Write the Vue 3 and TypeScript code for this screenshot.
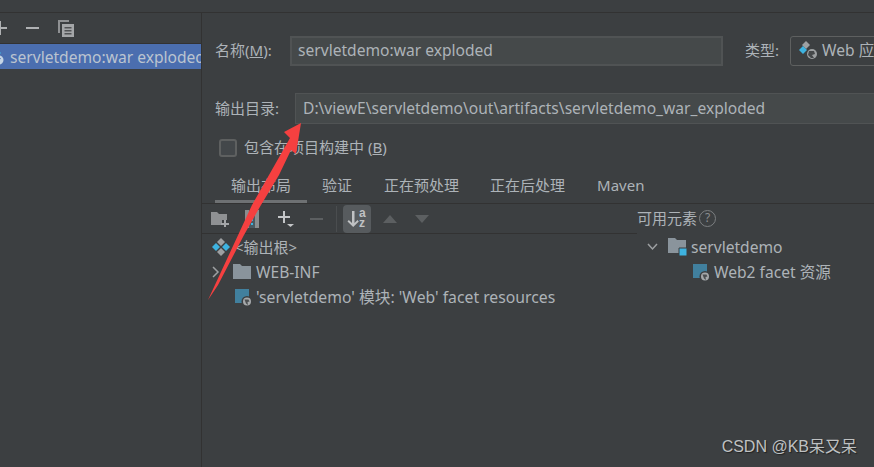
<script setup lang="ts">
const tabs: string[] = ['输出布局', '验证', '正在预处理', '正在后处理', 'Maven']
</script>

<template>
  <div class="root">
    <div class="topstrip"></div>
    <div class="main">
      <aside class="side">
        <div class="side-tools">
          <svg width="14" height="14" viewBox="0 0 14 14" class="plus"><path d="M0 6h14v2H0zM6 0h2v14H6z" fill="#afb1b3"/></svg>
          <svg width="14" height="4" viewBox="0 0 14 4" class="minus"><rect y="1" width="13" height="2" fill="#afb1b3"/></svg>
          <svg width="16" height="17" viewBox="0 0 16 17" class="copy"><path d="M0 0h11v2H2v11H0z" fill="#8f9193"/><path d="M4 4h12v13H4z" fill="#a4a6a8"/><path d="M6.500 7h7v1.500h-7zM6.500 10h7v1.500h-7zM6.500 13h7v1.500h-7z" fill="#505254"/></svg>
        </div>
        <div class="artifact">
          <svg width="16" height="16" viewBox="0 0 16 16" class="art-icon"><path d="M1 1l4-1 4 4-4 4-4-4z" fill="#3eb3e0"/><circle cx="7" cy="11" r="4.500" fill="#c5d4e5"/><path d="M2 9h7l-2 3-2 2z" fill="#4b6eaf"/></svg>
          <span>servletdemo:war exploded</span>
        </div>
      </aside>
      <section class="content">
        <div class="row name-row">
          <label class="lbl">名称(<u>M</u>):</label>
          <div class="field name-field">servletdemo:war exploded</div>
          <label class="lbl type-lbl">类型:</label>
          <div class="combo">
            <svg width="20" height="20" viewBox="0 0 20 20"><path d="M8 1l4 4-4 4-4-4z" fill="#9da0a2"/><path d="M5 6l4 4-4 4-4-4z" fill="#3eb3e0"/><circle cx="14" cy="14" r="5" fill="#9da0a2"/><path d="M11 11h5l1 3-3 1 2 3h-3l-3-3z" fill="#45484a"/></svg>
            <span>Web 应用</span>
          </div>
        </div>
        <div class="row out-row">
          <label class="lbl">输出目录:</label>
          <div class="field out-field">D:\viewE\servletdemo\out\artifacts\servletdemo_war_exploded</div>
        </div>
        <div class="check-row">
          <span class="check"></span>
          <span class="check-text">包含在项目构建中 (<u>B</u>)</span>
        </div>
        <nav class="tabs">
          <span v-for="(t, i) in tabs" :key="t" class="tab" :class="{ on: i === 0 }">{{ t }}</span>
        </nav>
        <div class="panes">
          <div class="left-pane">
            <div class="tool">
              <svg width="18" height="16" viewBox="0 0 18 16"><path d="M0 1h6l2 2h8v6h-5v5H0z" fill="#8f9193"/><path d="M13 9h2v3h3v2h-3v2h-2v-2h-3v-2h3z" fill="#a4a6a8"/></svg>
              <svg width="14" height="18" viewBox="0 0 14 18" class="film"><path d="M0 0h14v18H0z" fill="#8a8d8f"/><path d="M4 0h6v18H4z" fill="#4a5a62"/><path d="M6 1h2v2H6zM6 5h2v2H6zM6 9h2v2H6zM6 13h2v2H6z" fill="#3eb3e0"/></svg>
              <span class="add">
                <svg width="20" height="20" viewBox="0 0 20 20"><path d="M1 7h12v2H1zM6 2h2v12H6z" fill="#c4c6c8"/><path d="M10 15h7l-3.500 3z" fill="#c4c6c8"/></svg>
              </span>
              <svg width="13" height="4" viewBox="0 0 13 4" class="t-minus"><rect y="1" width="13" height="2" fill="#5c5f61"/></svg>
              <span class="tool-sep"></span>
              <span class="sort">
                <svg width="22" height="24" viewBox="0 0 22 24"><path d="M6 4h2.500v12l3-3 1.300 1.500L7.200 20 1.500 14.500 2.800 13 6 16z" fill="#c0c2c4"/><text x="13" y="10" class="az">a</text><text x="13" y="20" class="az">z</text></svg>
              </span>
              <svg width="16" height="10" viewBox="0 0 16 10" class="up"><path d="M8 1l7 8H1z" fill="#5c5f61"/></svg>
              <svg width="16" height="10" viewBox="0 0 16 10" class="down"><path d="M1 1h14L8 9z" fill="#5c5f61"/></svg>
            </div>
            <div class="tree">
              <div class="node root-node">
                <svg width="18" height="18" viewBox="0 0 18 18"><path d="M9 0l4 4-4 4-4-4z" fill="#9da0a2"/><path d="M4 5l4 4-4 4-4-4z" fill="#3eb3e0"/><path d="M14 5l4 4-4 4-4-4z" fill="#3eb3e0"/><path d="M9 10l4 4-4 4-4-4z" fill="#9da0a2"/></svg>
                <span>&lt;输出根&gt;</span>
              </div>
              <div class="node inf-node">
                <svg width="8" height="12" viewBox="0 0 8 12" class="chev"><path d="M1 1l5 5-5 5" fill="none" stroke="#9da0a2" stroke-width="1.500"/></svg>
                <svg width="18" height="15" viewBox="0 0 18 15"><path d="M0 0h7l2 2h9v13H0z" fill="#8a949c"/></svg>
                <span>WEB-INF</span>
              </div>
              <div class="node res-node">
                <svg width="18" height="18" viewBox="0 0 18 18"><path d="M1 1h14v14H1z" fill="#41809e"/><circle cx="13" cy="13.500" r="5.500" fill="#3c3f41"/><circle cx="13" cy="13.500" r="4" fill="#a5a8aa"/><path d="M10.500 11.500h4l1 2-2 .5.500 3-2-1.500z" fill="#4c4f51"/></svg>
                <span>'servletdemo' 模块: 'Web' facet resources</span>
              </div>
            </div>
          </div>
          <div class="right-pane">
            <div class="avail">
              <span>可用元素</span>
              <span class="help">?</span>
            </div>
            <div class="node mod-node">
              <svg width="11" height="8" viewBox="0 0 11 8" class="chev2"><path d="M1 1l4.500 5L10 1" fill="none" stroke="#9da0a2" stroke-width="1.500"/></svg>
              <svg width="19" height="19" viewBox="0 0 19 19"><path d="M0 1h7l2 2h9v13H0z" fill="#8a949c"/><path d="M11 11h8v8h-8z" fill="#3eb3e0" stroke="#3c3f41"/></svg>
              <span>servletdemo</span>
            </div>
            <div class="node facet-node">
              <svg width="18" height="18" viewBox="0 0 18 18"><path d="M1 1h14v14H1z" fill="#41809e"/><circle cx="13" cy="13.500" r="5.500" fill="#3c3f41"/><circle cx="13" cy="13.500" r="4" fill="#a5a8aa"/><path d="M10.500 11.500h4l1 2-2 .5.500 3-2-1.500z" fill="#4c4f51"/></svg>
              <span>Web2 facet 资源</span>
            </div>
          </div>
        </div>
      </section>
    </div>
    <svg class="arrow" width="110" height="185" viewBox="200 120 110 185">
      <polygon points="301,123 284,132 290,138 269,175 252,205 208,300 218,285 244,235 261,205 279,175 291,150 296,154" fill="#f54040"/>
    </svg>
    <div class="mark">CSDN @KB呆又呆</div>
  </div>
</template>

<style>
html, body { margin: 0; background: #3c3f41; }
</style>

<style scoped>
.root {
  position: relative;
  width: 874px;
  height: 467px;
  overflow: hidden;
  background: #3c3f41;
  color: #adb3b8;
  font-family: "Noto Sans", "Noto Sans CJK SC", sans-serif;
  font-size: 15px;
  line-height: 20px;
  display: flex;
  flex-direction: column;
}
.topstrip { height: 12px; flex: none; border-bottom: 1px solid #323232; }
.main { flex: 1; display: flex; min-height: 0; }
.side { width: 201px; flex: none; border-right: 1px solid #323232; }
.side-tools {
  height: 30px;
  display: flex;
  align-items: center;
  border-bottom: 1px solid #323232;
  position: relative;
}
.plus { margin-left: -7px; }
.minus { margin-left: 19px; }
.copy { margin-left: 18px; }
.artifact {
  height: 25px;
  background: #4b6eaf;
  display: flex;
  align-items: center;
  white-space: nowrap;
  overflow: hidden;
  color: #bbc4d0;
  font-size: 15.6px;
}
.art-icon { margin-left: -8px; margin-right: 2px; flex: none; }
.content { flex: 1; min-width: 0; overflow: hidden; }
.row { display: flex; align-items: center; white-space: nowrap; }
.name-row { margin-top: 23px; padding-left: 13px; height: 30px; }
.out-row { margin-top: 27px; padding-left: 13px; height: 31px; }
.lbl { flex: none; padding-bottom: 2px; }
.name-row .lbl:first-child { width: 75px; }
.out-row .lbl { width: 80px; }
.field {
  box-sizing: border-box;
  height: 100%;
  background: #45494a;
  border: 2px solid #505354;
  color: #adb3b8;
  padding: 0 6px 2px;
  display: flex;
  align-items: center;
  font-size: 15.6px;
}
.name-field { width: 433px; flex: none; }
.type-lbl { margin-left: 22px; width: 45px; }
.combo {
  box-sizing: border-box;
  height: 30px;
  flex: none;
  width: 120px;
  border: 1px solid #5e6060;
  border-radius: 3px;
  padding: 0 0 2px 7px;
  display: flex;
  align-items: center;
  gap: 4px;
  font-size: 15.6px;
  white-space: nowrap;
  overflow: hidden;
}
.combo svg { flex: none; }
.out-field { flex: 1; border-width: 1px; border-right: 0; padding-left: 7px; }
.check-row { display: flex; align-items: center; margin-top: 15px; padding-left: 17px; height: 18px; }
.check {
  box-sizing: border-box;
  width: 18px;
  height: 18px;
  border: 2px solid #5e6060;
  border-radius: 3px;
  background: #43474a;
}
.check-text { margin-left: 7px; padding-bottom: 2px; white-space: nowrap; }
.tabs { display: flex; margin-top: 13px; padding-left: 13px; height: 34px; box-sizing: border-box; border-bottom: 1px solid #323232; }
.tab { padding: 0 16px 3px; height: 30px; display: flex; align-items: center; white-space: nowrap; }
.tab.on { border-bottom: 3px solid #6e7173; padding-bottom: 0; }
.tab:nth-child(2) { padding-left: 15px; padding-right: 16px; }
.tab:nth-child(4) { padding-left: 15px; }
.panes { display: flex; }
.left-pane { width: 435px; flex: none; }
.right-pane { flex: 1; white-space: nowrap; }
.tool {
  height: 30px;
  box-sizing: border-box;
  border-bottom: 1px solid #323232;
  display: flex;
  align-items: center;
  padding-left: 9px;
}
.film { margin-left: 16px; }
.add { margin-left: 18px; display: flex; }
.t-minus { margin-left: 13px; }
.tool-sep { width: 1px; height: 26px; background: #4a4d4f; margin-left: 13px; }
.sort {
  margin-left: 6px;
  width: 28px;
  height: 28px;
  border-radius: 4px;
  background: #575b5e;
  display: flex;
  align-items: center;
  justify-content: center;
}
.up { margin-left: 11px; }
.down { margin-left: 16px; }
.az { font-size: 12px; font-weight: 700; fill: #c0c2c4; font-family: "Liberation Sans", sans-serif; }
.node { height: 25px; display: flex; align-items: center; white-space: nowrap; font-size: 15.6px; }
.root-node { padding-left: 10px; gap: 5px; font-size: 15px; }
.inf-node { padding-left: 10px; }
.inf-node .chev { margin-right: 13px; }
.inf-node span { margin-left: 5px; }
.res-node { padding-left: 32px; gap: 4px; font-size: 15.75px; }
.avail { height: 28px; display: flex; align-items: center; }
.help {
  box-sizing: border-box;
  width: 17px;
  height: 17px;
  margin-left: 2px;
  border: 1.500px solid #7c7f81;
  border-radius: 50%;
  display: flex;
  align-items: center;
  justify-content: center;
  font-size: 12px;
  color: #8a8d8f;
}
.mod-node { margin-top: 2px; padding-left: 10px; }
.chev2 { margin-right: 10px; }
.mod-node span { margin-left: 4px; }
.facet-node { padding-left: 55px; gap: 4px; }
.arrow { position: absolute; left: 200px; top: 120px; }
.mark {
  position: absolute;
  right: 17px;
  top: 437px;
  font-family: "Liberation Sans", "Noto Sans CJK SC", sans-serif;
  font-size: 16px;
  color: #bfc1c2;
  text-shadow: 1px 1px 1px #222;
  white-space: nowrap;
}
</style>
